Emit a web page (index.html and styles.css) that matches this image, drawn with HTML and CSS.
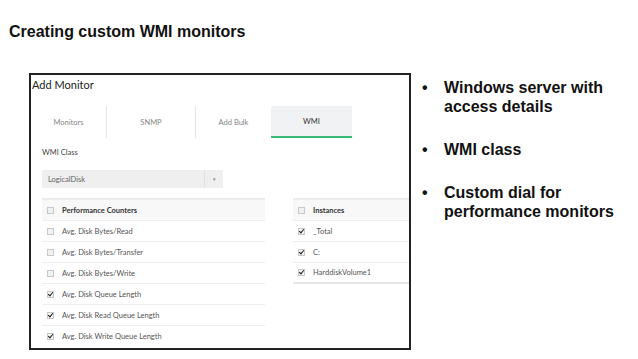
FILE: index.html
```html
<!DOCTYPE html>
<html>
<head>
<meta charset="utf-8">
<link rel="stylesheet" href="styles.css">
</head>
<body>
<div class="slide">
  <h1 class="title">Creating custom WMI monitors</h1>
  <div class="content">
    <div class="frame">
      <div class="frame-head">Add Monitor</div>
      <div class="tabs">
        <div class="tab t1">Monitors</div>
        <div class="tab t2">SNMP</div>
        <div class="tab t3">Add Bulk</div>
        <div class="tab t4 active">WMI</div>
      </div>
      <div class="form">
        <div class="label">WMI Class</div>
        <div class="select"><span class="sel-text">LogicalDisk</span><span class="sel-arrow">▾</span></div>
        <div class="tables">
          <div class="table left">
            <div class="trow head"><span class="cb"></span>Performance Counters</div>
            <div class="trow"><span class="cb"></span>Avg. Disk Bytes/Read</div>
            <div class="trow"><span class="cb"></span>Avg. Disk Bytes/Transfer</div>
            <div class="trow"><span class="cb"></span>Avg. Disk Bytes/Write</div>
            <div class="trow"><span class="cb on"></span>Avg. Disk Queue Length</div>
            <div class="trow"><span class="cb on"></span>Avg. Disk Read Queue Length</div>
            <div class="trow last"><span class="cb on"></span>Avg. Disk Write Queue Length</div>
          </div>
          <div class="table right">
            <div class="trow head"><span class="cb"></span>Instances</div>
            <div class="trow"><span class="cb on"></span>_Total</div>
            <div class="trow"><span class="cb on"></span>C:</div>
            <div class="trow endrow"><span class="cb on"></span>HarddiskVolume1</div>
          </div>
        </div>
      </div>
    </div>
    <ul class="bullets">
      <li>Windows server with access details</li>
      <li>WMI class</li>
      <li>Custom dial for performance monitors</li>
    </ul>
  </div>
</div>
</body>
</html>
```
FILE: styles.css
```css
html, body {
  margin: 0;
  padding: 0;
  background: #fff;
}
.slide {
  width: 638px;
  height: 359px;
  overflow: hidden;
}
.title {
  margin: 0;
  padding: 23px 0 0 9px;
  font-family: "Liberation Sans", Arial, sans-serif;
  font-weight: bold;
  font-size: 16px;
  line-height: 17px;
  color: #111;
}
.content {
  display: flex;
  margin-top: 33px;
}
.frame {
  margin-left: 29px;
  width: 378px;
  height: 273px;
  border: 2px solid #222;
  overflow: hidden;
  font-family: Lato, "Open Sans", sans-serif;
  color: #444;
}
.frame-head {
  font-size: 11px;
  line-height: 13px;
  padding: 3px 0 0 1px;
  color: #222;
}
.tabs {
  display: flex;
  margin-top: 15px;
  height: 32px;
}
.tab {
  font-size: 7.5px;
  color: #888;
  display: flex;
  align-items: center;
  justify-content: center;
  border-right: 1px solid #e6e6e6;
  box-sizing: border-box;
}
.t1 { width: 76px; }
.t2 { width: 89px; }
.t3 { width: 75px; border-right: none; }
.t4 { width: 81px; border-right: none; }
.tab.active {
  background: #f1f2f3;
  border-bottom: 2px solid #3aba7a;
  color: #333;
}
.form {
  padding: 10px 0 0 11px;
}
.label {
  font-size: 7.5px;
  color: #444;
  line-height: 10px;
}
.select {
  margin-top: 12px;
  width: 181px;
  height: 18px;
  background: #efefef;
  display: flex;
  align-items: center;
  font-size: 7.5px;
  color: #666;
}
.sel-text {
  flex: 1;
  padding-left: 6px;
}
.sel-arrow {
  width: 18px;
  height: 18px;
  border-left: 1px solid #e2e2e2;
  display: flex;
  align-items: center;
  justify-content: center;
  font-size: 5px;
  color: #888;
}
.tables {
  display: flex;
  margin-top: 10px;
  gap: 28px;
}
.table {
  flex-shrink: 0;
}
.table.left { width: 223px; }
.table.right { width: 140px; }
.trow {
  height: 21px;
  box-sizing: border-box;
  display: flex;
  align-items: center;
  font-size: 7.5px;
  color: #555;
  border-bottom: 1px solid #eeeeee;
  padding-left: 5px;
}
.trow.head {
  background: #f8f8f8;
  border-top: 2px solid #ececec;
  font-weight: bold;
  color: #333;
  height: 23px;
}
.trow.last { border-bottom: none; }
.trow.endrow { border-bottom: 2px solid #e6e6e6; }
.cb {
  width: 5px;
  height: 5px;
  border: 1px solid #c8c8c8;
  background: #f2f2f2;
  margin-right: 8px;
  position: relative;
  flex-shrink: 0;
}
.cb.on::after {
  content: "";
  position: absolute;
  left: 1px;
  top: -1px;
  width: 2px;
  height: 4px;
  border-right: 1.5px solid #222;
  border-bottom: 1.5px solid #222;
  transform: rotate(40deg);
}
.bullets {
  margin: 5px 0 0 0;
  padding: 0 0 0 33px;
  list-style: none;
  font-family: "Liberation Sans", Arial, sans-serif;
  font-weight: bold;
  font-size: 16px;
  line-height: 19px;
  color: #111;
  width: 185px;
}
.bullets li {
  position: relative;
  margin-bottom: 24px;
}
.bullets li::before {
  content: "•";
  position: absolute;
  left: -22px;
  top: 0;
}
```
